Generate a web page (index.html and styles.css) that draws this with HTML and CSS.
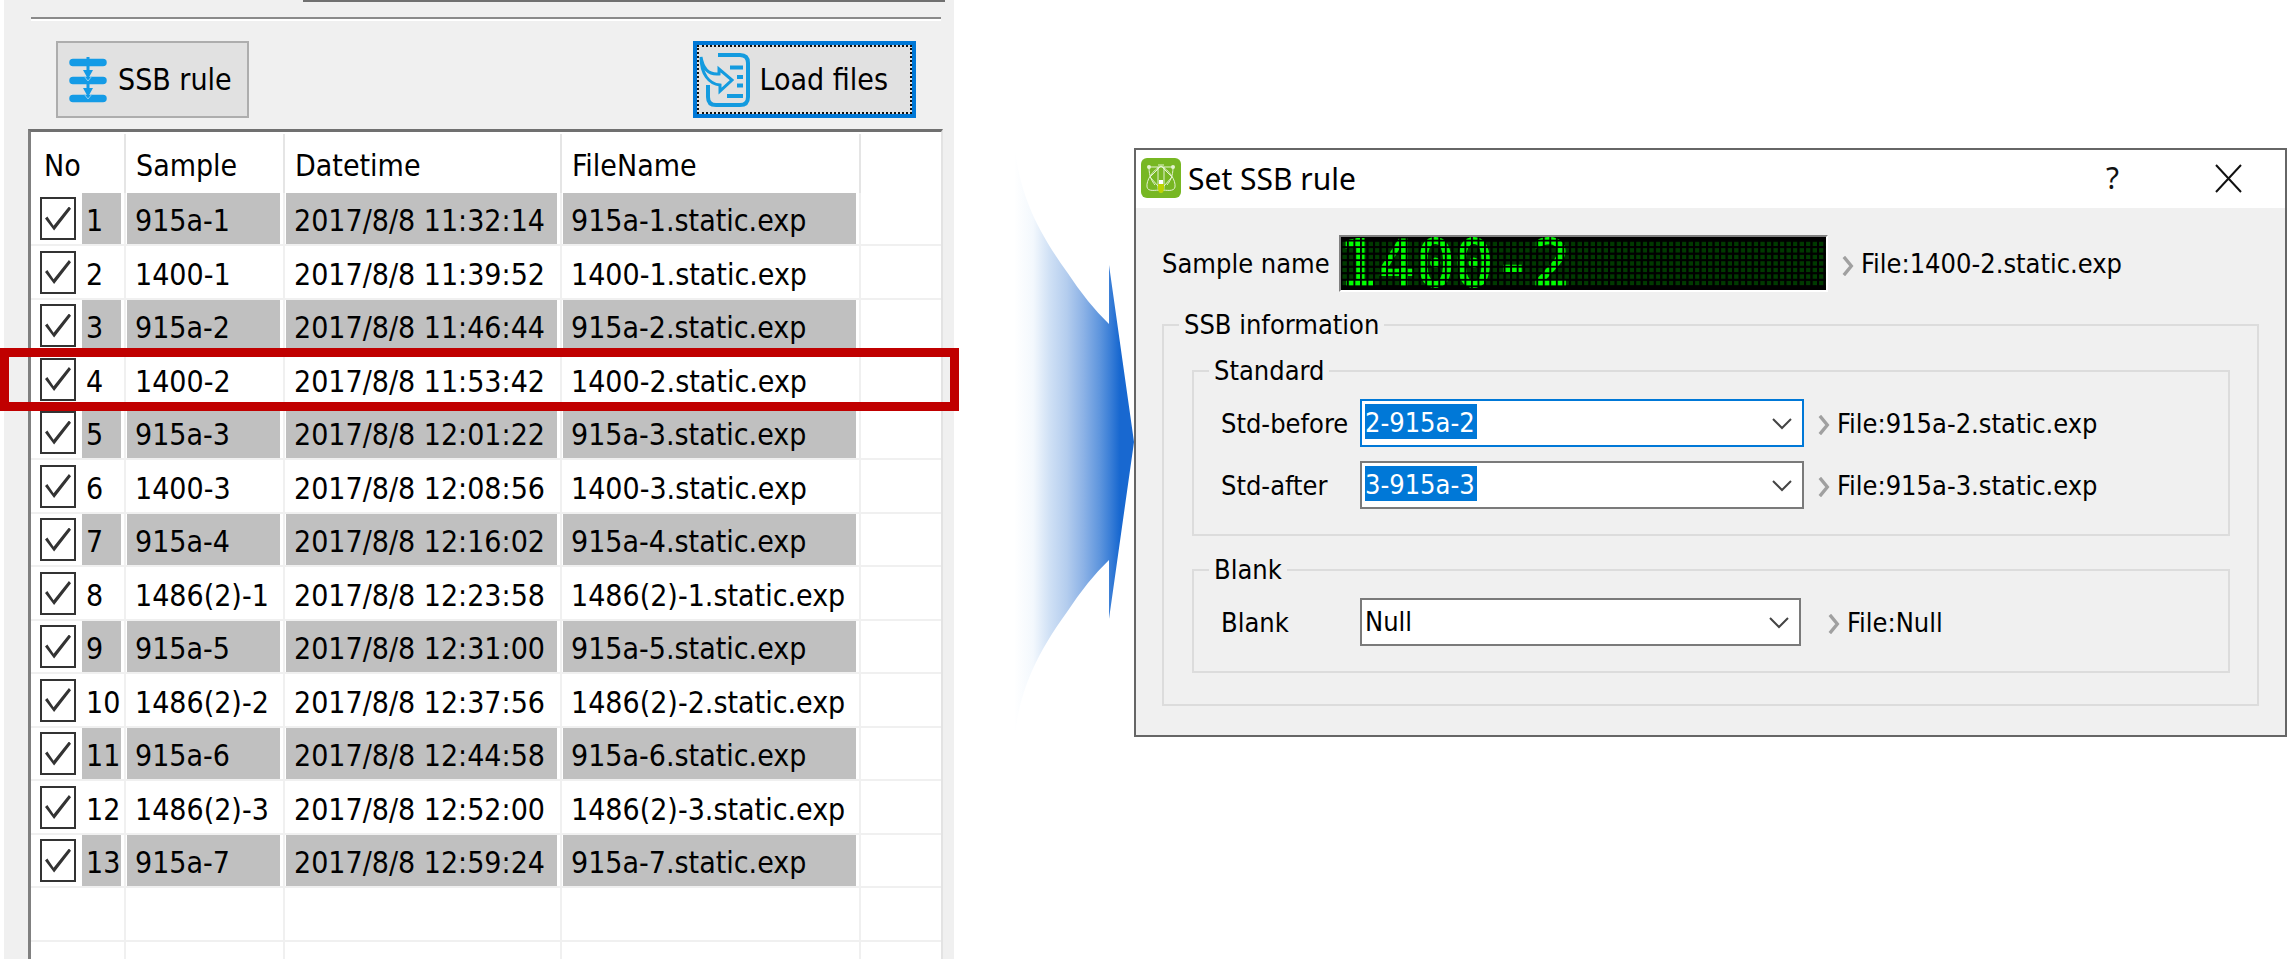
FILE: index.html
```html
<!DOCTYPE html>
<html lang="en">
<head>
<meta charset="utf-8">
<title>Set SSB rule</title>
<link rel="stylesheet" href="styles.css">
</head>
<body>
<main class="page">
  <section class="files">
    <div class="tab-edge"></div>
    <div class="divider"></div>
    <div class="toolbar">
      <button class="tool" type="button">
        <svg class="rule-icon" viewBox="0 0 38 46" aria-hidden="true">
          <g stroke="#149be6" stroke-width="7.5" stroke-linecap="round"><path d="M4 5.500h30M4 23.500h30M4 41.500h30"/></g>
          <path d="M19 0v15M19 25v9" stroke="#149be6" stroke-width="3"/>
          <path d="M14 13h10l-5 9zM14 31h10l-5 9z" fill="#149be6"/>
          <path d="M15 19l4 5 4-5M15 37l4 5 4-5" fill="none" stroke="#8fd0f4" stroke-width="1"/>
        </svg>
        <span>SSB rule</span>
      </button>
      <button class="tool tool-focus" type="button">
        <svg class="load-icon" viewBox="0 0 52 56" fill="none" stroke="#149bdf" stroke-width="4" aria-hidden="true">
          <path d="M19 3h22q8 0 8 8v34q0 8-8 8H17q-8 0-8-8V33"/>
          <path d="M2 5C4 17 10 23 20 22v-5l13 11-12 11v-6C10 32 2 22 2 5z" stroke-width="3"/>
          <path d="M31 15.500h13M38 25h6M38 33.500h6M28 44h16"/>
        </svg>
        <span>Load files</span>
      </button>
    </div>
    <div class="frame">
      <table class="grid">
        <colgroup><col class="c-no"><col class="c-sample"><col class="c-date"><col class="c-file"><col></colgroup>
        <thead><tr><th>No</th><th>Sample</th><th>Datetime</th><th>FileName</th><th></th></tr></thead>
        <tbody>
          <tr class="std"><td><label class="no"><input type="checkbox" checked><span>1</span></label></td><td><div>915a-1</div></td><td><div>2017/8/8 11:32:14</div></td><td><div>915a-1.static.exp</div></td><td></td></tr>
          <tr><td><label class="no"><input type="checkbox" checked><span>2</span></label></td><td><div>1400-1</div></td><td><div>2017/8/8 11:39:52</div></td><td><div>1400-1.static.exp</div></td><td></td></tr>
          <tr class="std"><td><label class="no"><input type="checkbox" checked><span>3</span></label></td><td><div>915a-2</div></td><td><div>2017/8/8 11:46:44</div></td><td><div>915a-2.static.exp</div></td><td></td></tr>
          <tr class="marked"><td><label class="no"><input type="checkbox" checked><span>4</span></label></td><td><div>1400-2</div></td><td><div>2017/8/8 11:53:42</div></td><td><div>1400-2.static.exp</div></td><td><i class="marker"></i></td></tr>
          <tr class="std"><td><label class="no"><input type="checkbox" checked><span>5</span></label></td><td><div>915a-3</div></td><td><div>2017/8/8 12:01:22</div></td><td><div>915a-3.static.exp</div></td><td></td></tr>
          <tr><td><label class="no"><input type="checkbox" checked><span>6</span></label></td><td><div>1400-3</div></td><td><div>2017/8/8 12:08:56</div></td><td><div>1400-3.static.exp</div></td><td></td></tr>
          <tr class="std"><td><label class="no"><input type="checkbox" checked><span>7</span></label></td><td><div>915a-4</div></td><td><div>2017/8/8 12:16:02</div></td><td><div>915a-4.static.exp</div></td><td></td></tr>
          <tr><td><label class="no"><input type="checkbox" checked><span>8</span></label></td><td><div>1486(2)-1</div></td><td><div>2017/8/8 12:23:58</div></td><td><div>1486(2)-1.static.exp</div></td><td></td></tr>
          <tr class="std"><td><label class="no"><input type="checkbox" checked><span>9</span></label></td><td><div>915a-5</div></td><td><div>2017/8/8 12:31:00</div></td><td><div>915a-5.static.exp</div></td><td></td></tr>
          <tr><td><label class="no"><input type="checkbox" checked><span>10</span></label></td><td><div>1486(2)-2</div></td><td><div>2017/8/8 12:37:56</div></td><td><div>1486(2)-2.static.exp</div></td><td></td></tr>
          <tr class="std"><td><label class="no"><input type="checkbox" checked><span>11</span></label></td><td><div>915a-6</div></td><td><div>2017/8/8 12:44:58</div></td><td><div>915a-6.static.exp</div></td><td></td></tr>
          <tr><td><label class="no"><input type="checkbox" checked><span>12</span></label></td><td><div>1486(2)-3</div></td><td><div>2017/8/8 12:52:00</div></td><td><div>1486(2)-3.static.exp</div></td><td></td></tr>
          <tr class="std"><td><label class="no"><input type="checkbox" checked><span>13</span></label></td><td><div>915a-7</div></td><td><div>2017/8/8 12:59:24</div></td><td><div>915a-7.static.exp</div></td><td></td></tr>
          <tr><td></td><td></td><td></td><td></td><td></td></tr>
          <tr><td></td><td></td><td></td><td></td><td></td></tr>
        </tbody>
      </table>
    </div>
  </section>

  <svg class="arrow" viewBox="0 0 180 590" preserveAspectRatio="none" aria-hidden="true">
    <defs>
      <linearGradient id="fade" gradientUnits="userSpaceOnUse" x1="60" y1="0" x2="180" y2="0">
        <stop offset="0" stop-color="#fff"/><stop offset=".16" stop-color="#f3f8fd"/><stop offset=".3" stop-color="#cfe0f5"/>
        <stop offset=".44" stop-color="#b4cdee"/><stop offset=".58" stop-color="#8cb2e6"/><stop offset=".72" stop-color="#5c94dd"/>
        <stop offset=".8" stop-color="#3b7fd7"/><stop offset=".88" stop-color="#1868d0"/><stop offset="1" stop-color="#1868d0"/>
      </linearGradient>
    </defs>
    <path d="M61 0C66 45 82 80 113 123Q134 155 155 175V116L180 293 155 470V411Q134 431 113 463C82 506 66 541 61 586Z" fill="url(#fade)"/>
  </svg>

  <section class="dialog">
    <header class="titlebar">
      <svg class="app-icon" viewBox="0 0 40 40" aria-hidden="true">
        <rect width="40" height="40" rx="6" fill="#77b723"/>
        <g fill="none" stroke="#e4f2d0" stroke-width="1">
          <path d="M8 9h24M8 9c0 10 3 14 6 18M32 9c0 10-3 14-6 18"/>
          <path d="M20 8C12 12 5 22 6 29c1 5 8 3 14 3s13 2 14-3C35 22 28 12 20 8z"/>
          <path d="M9 19l11-11 11 11-8 9h-6z"/>
          <path d="M17 7h6M17 9v20q0 5 3 5t3-5V9"/>
        </g>
        <path d="M18 22h4v4h-4z" fill="#fff"/><path d="M17 26h6v4q0 5-3 5t-3-5z" fill="#bcd400"/>
        <circle cx="8" cy="9" r="2" fill="#e4f2d0"/><circle cx="32" cy="9" r="2" fill="#e4f2d0"/>
      </svg>
      <h1>Set SSB rule</h1>
      <button class="caption" type="button">?</button>
      <button class="caption" type="button" aria-label="Close"><svg width="28" height="34" viewBox="0 0 28 34" stroke="#111" stroke-width="2"><path d="M1 4l25 27M26 4L1 31"/></svg></button>
    </header>
    <div class="content">
      <div class="sample-row">
        <span class="sample-label">Sample name</span>
        <div class="led">
          <svg class="led-lamps" aria-label="1400-2">
            <defs>
              <pattern id="off" x="0.3" y="3.6" width="6.53" height="6.53" patternUnits="userSpaceOnUse"><rect x="1" y="1" width="4.6" height="4.6" fill="#003a00"/></pattern>
              <pattern id="mesh" x="0.3" y="3.6" width="6.53" height="6.53" patternUnits="userSpaceOnUse"><path d="M0 0H6.530V1H1V5.600H5.600V1H6.530V6.530H0z" fill="#000"/></pattern>
            </defs>
            <rect y="4" width="100%" height="45" fill="url(#off)"/>
            <text class="led-text" x="-2" y="49">1400-2</text>
            <rect width="100%" height="100%" fill="url(#mesh)"/>
          </svg>
        </div>
        <div class="info"><svg class="chev" viewBox="0 0 14 24"><path d="M2 1l9 11-9 11" fill="none" stroke="#a0a0a0" stroke-width="4"/></svg><span>File:1400-2.static.exp</span></div>
      </div>
      <fieldset class="group">
        <legend>SSB information</legend>
        <fieldset class="subgroup">
          <legend>Standard</legend>
          <div class="field">
            <label for="before">Std-before</label>
            <div class="combo"><select id="before" class="selected active"><option>2-915a-2</option></select><svg class="drop" viewBox="0 0 20 12"><path d="M1 1l9 9 9-9" fill="none" stroke="#444" stroke-width="2"/></svg></div>
            <div class="info"><svg class="chev" viewBox="0 0 14 24"><path d="M2 1l9 11-9 11" fill="none" stroke="#a0a0a0" stroke-width="4"/></svg><span>File:915a-2.static.exp</span></div>
          </div>
          <div class="field">
            <label for="after">Std-after</label>
            <div class="combo"><select id="after" class="selected"><option>3-915a-3</option></select><svg class="drop" viewBox="0 0 20 12"><path d="M1 1l9 9 9-9" fill="none" stroke="#444" stroke-width="2"/></svg></div>
            <div class="info"><svg class="chev" viewBox="0 0 14 24"><path d="M2 1l9 11-9 11" fill="none" stroke="#a0a0a0" stroke-width="4"/></svg><span>File:915a-3.static.exp</span></div>
          </div>
        </fieldset>
        <fieldset class="subgroup">
          <legend>Blank</legend>
          <div class="field field-blank">
            <label for="blank">Blank</label>
            <div class="combo"><select id="blank"><option>Null</option></select><svg class="drop" viewBox="0 0 20 12"><path d="M1 1l9 9 9-9" fill="none" stroke="#444" stroke-width="2"/></svg></div>
            <div class="info"><svg class="chev" viewBox="0 0 14 24"><path d="M2 1l9 11-9 11" fill="none" stroke="#a0a0a0" stroke-width="4"/></svg><span>File:Null</span></div>
          </div>
        </fieldset>
      </fieldset>
    </div>
  </section>
</main>
</body>
</html>
```
FILE: styles.css
```css
* { box-sizing: border-box; }
body {
  margin: 0;
  height: 100vh;
  overflow: hidden;
  background: #fff;
  color: #000;
  font-family: "DejaVu Sans Condensed", "DejaVu Sans", sans-serif;
}
.page {
  display: grid;
  grid-template-columns: 954fr 180fr 1153fr;
  align-items: start;
  height: 100%;
}

/* File list */
.files {
  min-height: 100vh;
  margin-left: 4px;
  padding: 0 11px 0 24px;
  background: #f0f0f0;
  font-size: 30px;
}
.tab-edge { height: 2px; margin: 0 -2px 0 275px; background: #707070; }
.divider { height: 4px; margin: 15px 2px 0 3px; border-top: 2px solid #8a8a8a; border-bottom: 2px solid #fff; }
.toolbar { display: flex; justify-content: space-between; padding: 20px 27px 11px 28px; }
.tool {
  display: flex;
  align-items: center;
  gap: 11px;
  height: 77px;
  padding: 0 15px 0 11px;
  border: 2px solid #adadad;
  background: #e1e1e1;
  color: #000;
  font: inherit;
}
.rule-icon { width: 38px; height: 46px; }
.load-icon { width: 52px; height: 56px; }
.tool-focus {
  gap: 9px;
  padding: 0 24px 0 2px;
  border: 4px solid #0078d7;
  outline: 2px dotted #111;
  outline-offset: -6px;
}
.frame {
  padding: 2px 0 0 0;
  border-top: 3px solid #707070;
  border-left: 3px solid #808080;
  border-right: 2px solid #e3e3e3;
  background: #fff;
}
.grid { width: 100%; border-collapse: separate; border-spacing: 0; table-layout: fixed; }
.c-no { width: 95px; }
.c-sample { width: 159px; }
.c-date { width: 277px; }
.c-file { width: 299px; }
.grid th {
  height: 59px;
  padding: 3px 0 0 10px;
  border-right: 2px solid #e5e5e5;
  text-align: left;
  font-weight: normal;
}
.grid th:first-child { padding-left: 13px; }
.grid th:last-child, .grid td:last-child { border-right: 0; }
.grid td {
  height: 53px;
  padding: 0 3px 0 1px;
  border-right: 2px solid #f0f0f0;
  border-bottom: 2px solid #f0f0f0;
  white-space: nowrap;
}
.grid tbody tr:nth-child(even) td { height: 54px; }
.grid td div, .no span { height: 51px; line-height: 56px; padding-left: 8px; }
.grid td:first-child { padding-left: 9px; }
.no { display: flex; align-items: center; gap: 6px; }
.no span { flex: 1; padding-left: 4px; }
.std div, .std .no span { background: #c0c0c0; }
.no input {
  appearance: none;
  flex: none;
  width: 36px;
  height: 43px;
  margin: 0;
  border: 2px solid #333;
  background: #fff;
  display: grid;
  place-items: center;
}
.no input:checked::before {
  content: "";
  width: 26px;
  height: 24px;
  background: #333;
  clip-path: polygon(0 50%, 9% 42%, 33% 80%, 92% 0, 100% 9%, 35% 100%);
}
.marked { position: relative; }
.marker {
  position: absolute;
  inset: -5px -18px -4px -31px;
  border: 9px solid #c00000;
  pointer-events: none;
}

/* Arrow */
.arrow { width: 100%; height: 590px; margin-top: 149px; }

/* Dialog */
.dialog {
  margin-top: 148px;
  border: 2px solid #666;
  background: #f0f0f0;
  font-size: 27px;
}
.titlebar {
  display: flex;
  align-items: center;
  height: 58px;
  padding: 0 42px 2px 5px;
  background: #fff;
}
.app-icon { width: 40px; height: 40px; }
.titlebar h1 {
  flex: 1;
  margin: 0 0 0 7px;
  font: 400 30px "Noto Sans", sans-serif;
}
.caption { padding: 0; border: 0; background: none; color: #111; font: 30px/34px "Noto Sans", sans-serif; }
.caption svg { display: block; }
.caption + .caption { margin-left: 96px; }
.content { padding: 27px 26px 29px; }
.sample-row {
  display: grid;
  grid-template-columns: 177px 1fr 431px;
  align-items: center;
}
.led {
  height: 57px;
  border: 2px solid #808080;
  border-bottom-color: #fff;
  border-right-color: #fff;
  background: #000;
}
.led-lamps { display: block; width: 100%; height: 53px; overflow: visible; }
.led-text { font: 64px "DejaVu Sans Mono", monospace; fill: #0f0; stroke: #0f0; stroke-width: 2px; }
.info { display: flex; align-items: center; gap: 6px; padding-left: 13px; white-space: nowrap; }
.chev { width: 14px; height: 20px; margin-top: 4px; }
.group, .subgroup { min-width: 0; margin: 0; border: 2px solid #dcdcdc; }
.group legend { padding: 0 5px; line-height: 34px; }
.group { margin-top: 16px; padding: 12px 27px 31px 28px; }
.group > legend { margin-left: -13px; }
.subgroup { padding: 11px 0 25px 27px; }
.subgroup legend { margin-left: -12px; }
.subgroup + .subgroup { margin-top: 17px; }
.field {
  display: grid;
  grid-template-columns: 139px 1fr 424px;
  align-items: center;
}
.field + .field { margin-top: 14px; }
.field-blank { grid-template-columns: 139px 1fr 427px; }
.field-blank .info { padding-left: 26px; }
.combo { position: relative; }
.combo select {
  display: block;
  appearance: none;
  width: 100%;
  height: 48px;
  padding: 0 40px 2px 3px;
  border: 2px solid #7a7a7a;
  border-radius: 0;
  background: #fff;
  color: #000;
  font: inherit;
}
.combo .active { border-color: #0078d7; }
.combo .selected {
  background: linear-gradient(#0078d7, #0078d7) 3px 3px / 112px 35px no-repeat #fff;
  color: #fff;
}
.drop { position: absolute; right: 12px; top: 19px; width: 20px; height: 12px; pointer-events: none; }
```
